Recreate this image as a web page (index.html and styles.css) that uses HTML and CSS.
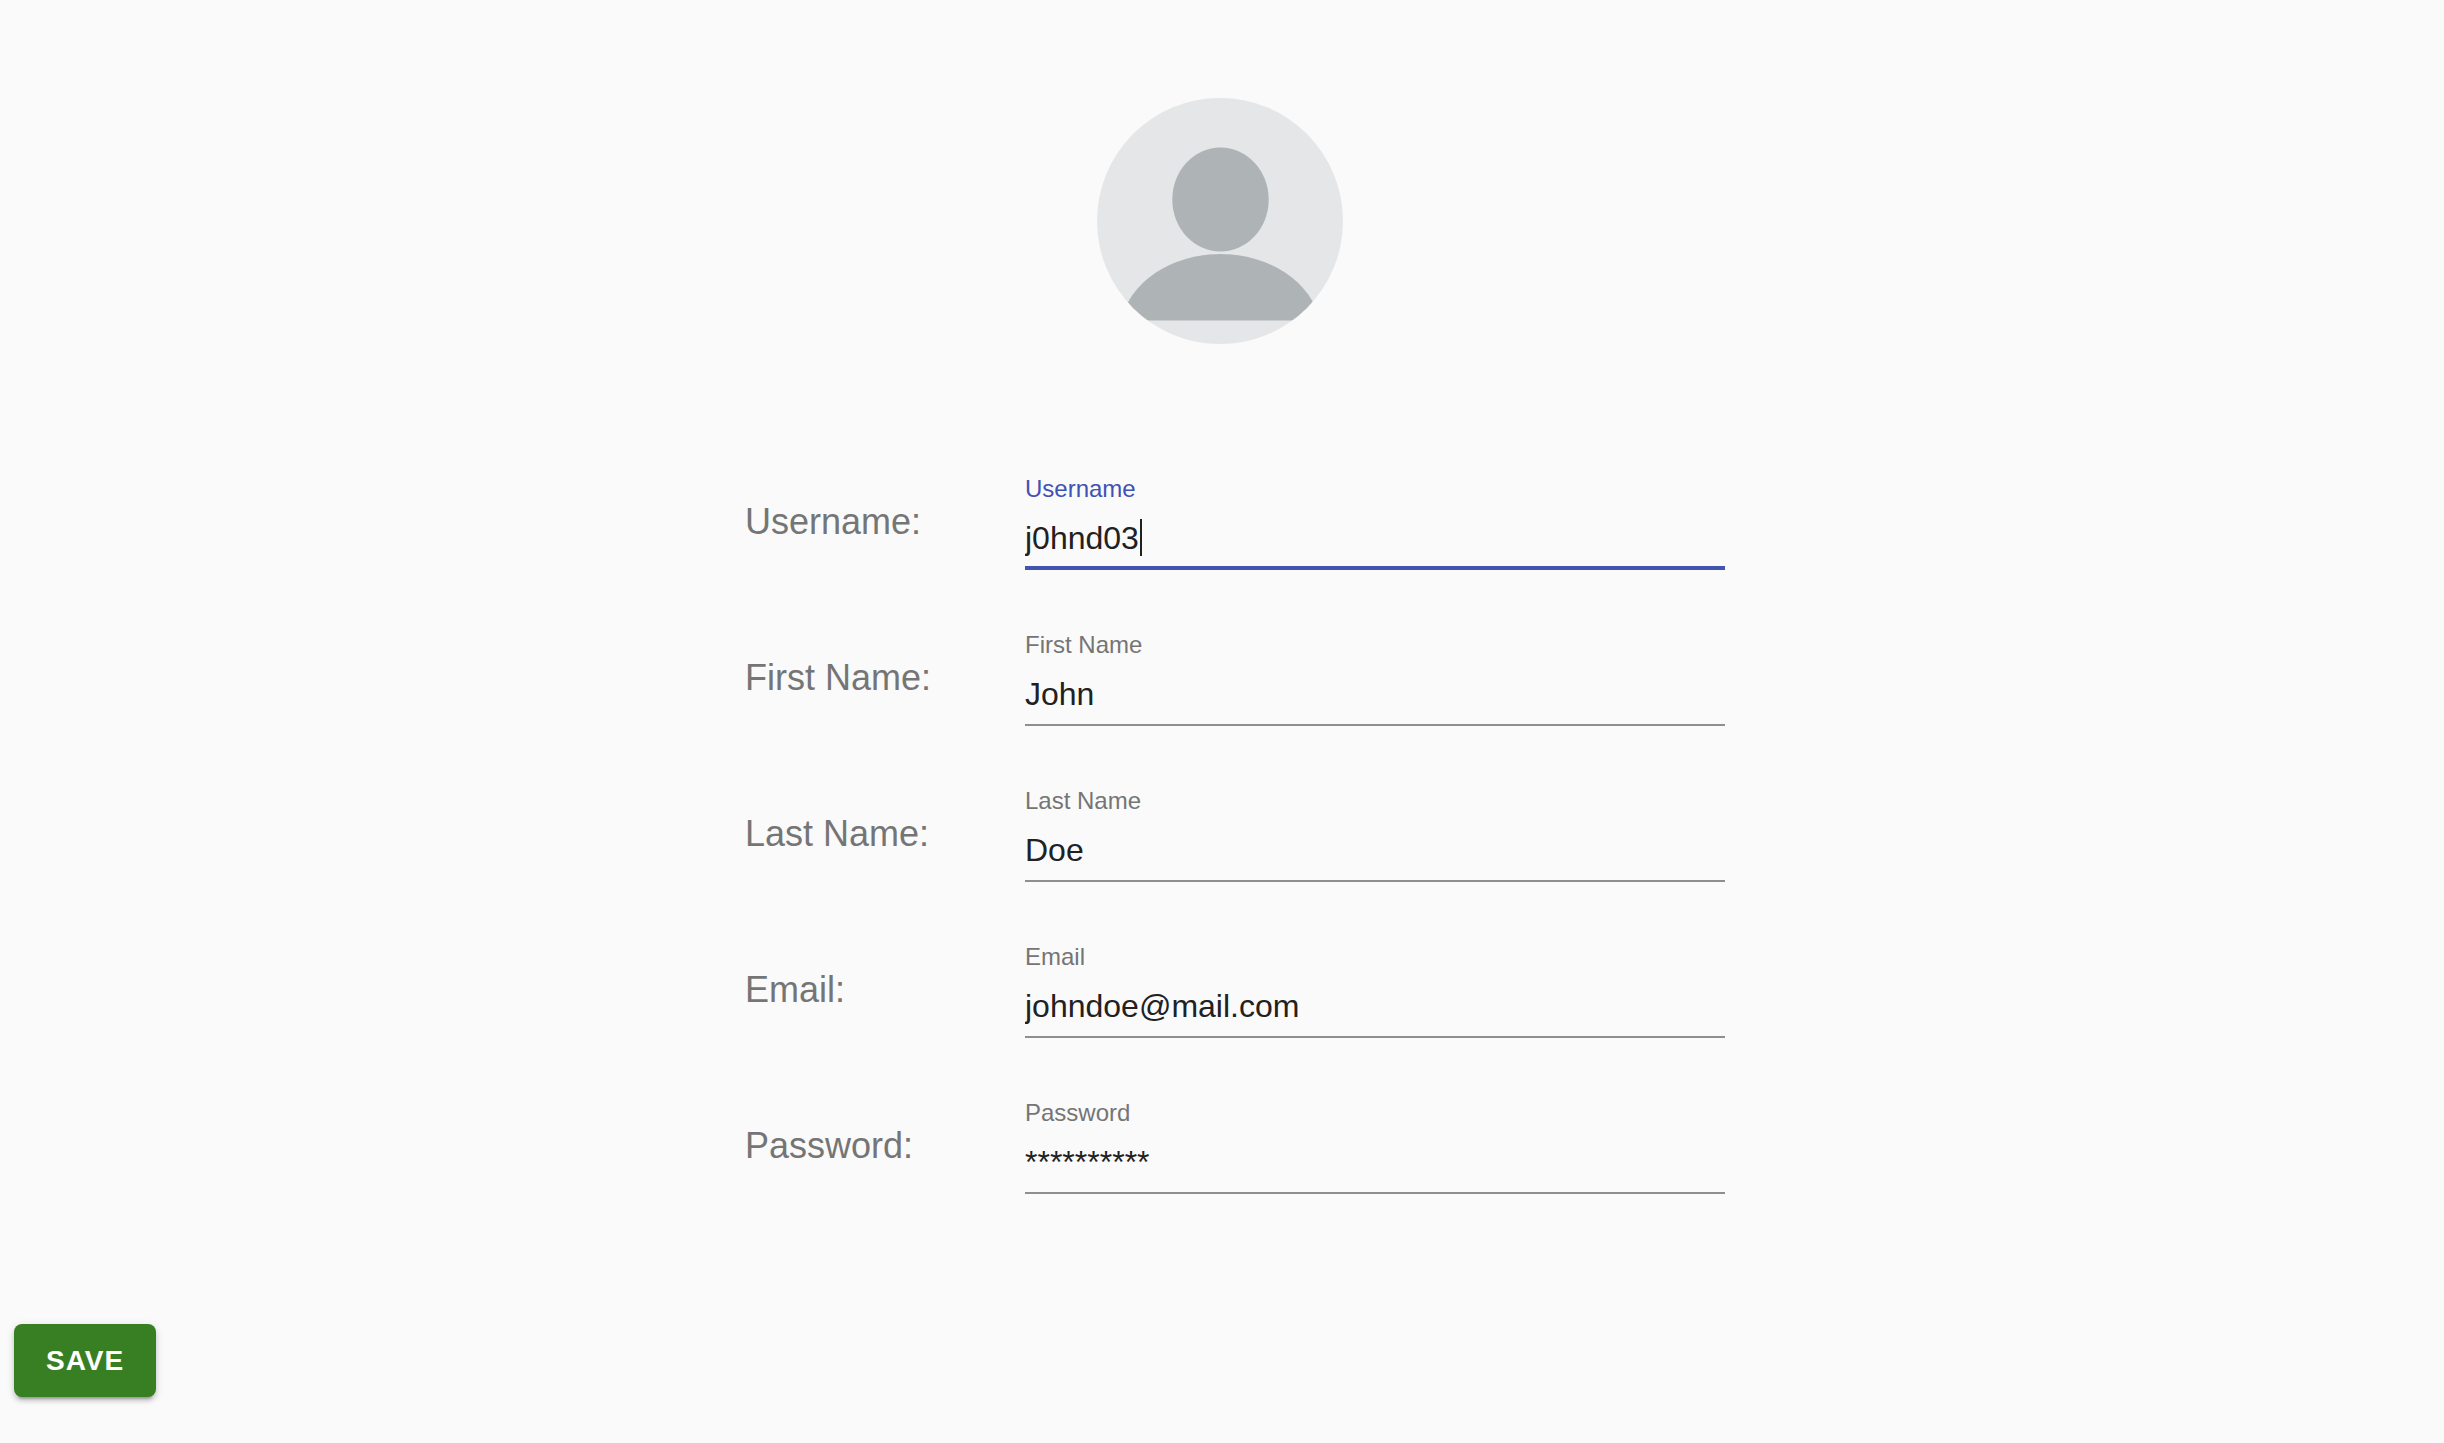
FILE: index.html
```html
<!DOCTYPE html>
<html lang="en">
<head>
    <meta charset="UTF-8">
    <meta name="viewport" content="width=device-width, initial-scale=1.0">
    <title>Edit Profile</title>
    <link rel="stylesheet" href="styles.css">
</head>
<body>
    <form class="profile-form">
        <svg class="avatar" viewBox="0 0 246 246" role="img" aria-label="Profile picture">
            <rect width="246" height="246" fill="#e4e6e8"/>
            <ellipse cx="123.5" cy="101.5" rx="48.2" ry="52" fill="#aeb4b6"/>
            <path d="M24.6 222.5A100 78 0 0 1 222.4 222.5Z" fill="#aeb4b6"/>
        </svg>

        <div class="fields">
            <div class="row">
                <label class="row-label" for="username">Username:</label>
                <div class="field focused">
                    <label class="field-label" for="username">Username</label>
                    <input type="text" id="username" name="username" value="j0hnd03">
                    <!-- Text cursor -->
                    <span class="cursor"></span>
                </div>
            </div>

            <div class="row">
                <label class="row-label" for="firstName">First Name:</label>
                <div class="field">
                    <label class="field-label" for="firstName">First Name</label>
                    <input type="text" id="firstName" name="firstName" value="John">
                </div>
            </div>

            <div class="row">
                <label class="row-label" for="lastName">Last Name:</label>
                <div class="field">
                    <label class="field-label" for="lastName">Last Name</label>
                    <input type="text" id="lastName" name="lastName" value="Doe">
                </div>
            </div>

            <div class="row">
                <label class="row-label" for="email">Email:</label>
                <div class="field">
                    <label class="field-label" for="email">Email</label>
                    <input type="email" id="email" name="email" value="johndoe@mail.com">
                </div>
            </div>

            <div class="row">
                <label class="row-label" for="password">Password:</label>
                <div class="field">
                    <label class="field-label" for="password">Password</label>
                    <input type="text" id="password" name="password" value="**********" autocomplete="off">
                </div>
            </div>
        </div>

        <button type="submit" class="save-button">SAVE</button>
    </form>
</body>
</html>
```
FILE: styles.css
```css
* {
    box-sizing: border-box;
}

body {
    font-family: Helvetica, "Liberation Sans", Arial, sans-serif;
    background-color: #fafafa;
    margin: 0;
    padding: 98px 18px 46px 14px;
}

.profile-form {
    display: flex;
    flex-direction: column;
    align-items: center;
    gap: 130px;
}

.avatar {
    display: block;
    width: 246px;
    height: 246px;
    border-radius: 50%;
}

.fields {
    display: flex;
    flex-direction: column;
    gap: 60px;
    width: 100%;
    max-width: 1010px;
    padding-left: 30px;
}

.row {
    display: grid;
    grid-template-columns: 2fr 5fr;
    align-items: center;
}

.row-label {
    font-size: 36px;
    color: #757575;
}

.field {
    position: relative;
}

.field-label {
    display: block;
    margin-bottom: 2px;
    font-size: 24px;
    line-height: 30px;
    color: #757575;
}

input {
    display: block;
    width: 100%;
    height: 64px;
    padding: 14px 0 12px;
    border: none;
    border-bottom: 2px solid #8f8f8f;
    background: none;
    font-family: inherit;
    font-size: 32px;
    color: #212121;
    outline: none;
}

.focused .field-label {
    color: #3f51b5;
}

.focused input {
    padding-bottom: 10px;
    border-bottom: 4px solid #4254af;
}

.cursor {
    position: absolute;
    left: 115px;
    bottom: 14px;
    width: 2px;
    height: 37px;
    background-color: #212121;
}

.save-button {
    align-self: flex-start;
    padding: 12px 32px;
    border: none;
    border-radius: 8px;
    background-color: #387f23;
    box-shadow: 0 6px 2px -4px rgba(0, 0, 0, 0.2), 0 4px 4px 0 rgba(0, 0, 0, 0.14), 0 2px 10px 0 rgba(0, 0, 0, 0.12);
    color: #fff;
    font-family: inherit;
    font-size: 28px;
    font-weight: bold;
    line-height: 49px;
    letter-spacing: 1px;
    cursor: pointer;
}
```
